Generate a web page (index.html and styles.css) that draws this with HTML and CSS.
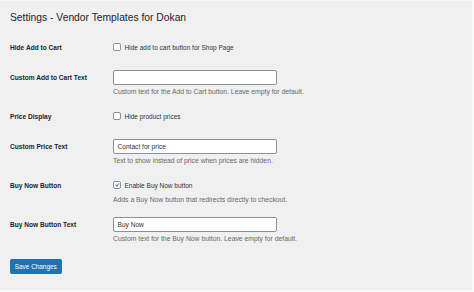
FILE: index.html
```html
<!DOCTYPE html>
<html lang="en">
<head>
<meta charset="utf-8">
<title>Settings - Vendor Templates for Dokan</title>
<link rel="stylesheet" href="styles.css">
</head>
<body>
<div class="page">
  <h1 class="title">Settings - Vendor Templates for Dokan</h1>
  <div class="form">
    <div class="row">
      <div class="label">Hide Add to Cart</div>
      <div class="field">
        <label class="check"><span class="box"></span>Hide add to cart button for Shop Page</label>
      </div>
    </div>
    <div class="row row-desc">
      <div class="label">Custom Add to Cart Text</div>
      <div class="field">
        <div class="input"></div>
        <p class="desc">Custom text for the Add to Cart button. Leave empty for default.</p>
      </div>
    </div>
    <div class="row">
      <div class="label">Price Display</div>
      <div class="field">
        <label class="check"><span class="box"></span>Hide product prices</label>
      </div>
    </div>
    <div class="row row-desc">
      <div class="label">Custom Price Text</div>
      <div class="field">
        <div class="input">Contact for price</div>
        <p class="desc">Text to show instead of price when prices are hidden.</p>
      </div>
    </div>
    <div class="row row-desc">
      <div class="label">Buy Now Button</div>
      <div class="field">
        <label class="check"><span class="box checked"><svg viewBox="0 0 20 20" width="8" height="8"><path d="M14.83 4.89l1.34.94-5.81 8.38H9.02L5.78 9.67l1.34-1.25 2.57 2.4z" fill="#3582c4"/></svg></span>Enable Buy Now button</label>
        <p class="desc">Adds a Buy Now button that redirects directly to checkout.</p>
      </div>
    </div>
    <div class="row row-desc">
      <div class="label">Buy Now Button Text</div>
      <div class="field">
        <div class="input">Buy Now</div>
        <p class="desc">Custom text for the Buy Now button. Leave empty for default.</p>
      </div>
    </div>
  </div>
  <button class="btn" type="button">Save Changes</button>
</div>
</body>
</html>
```
FILE: styles.css
```css
html, body {
  margin: 0;
  padding: 0;
  background: #f9f9fa;
}
body {
  font-family: "Liberation Sans", Arial, Helvetica, sans-serif;
  color: #1d2327;
}
.page {
  box-sizing: border-box;
  width: 472px;
  height: 289px;
  margin-top: 1px;
  background: #f0f0f1;
  padding: 9px 0 0 10px;
}
.title {
  margin: 0 0 6px;
  font-size: 10.3px;
  line-height: 16px;
  font-weight: 400;
  color: #1d2327;
}
.row {
  display: grid;
  grid-template-columns: 103px 1fr;
  padding: 7.5px 0;
}
.row-desc {
  padding-bottom: 5.5px;
}
.label {
  font-size: 6.6px;
  font-weight: 700;
  line-height: 15px;
  color: #1d2327;
}
.check {
  display: flex;
  align-items: center;
  height: 15px;
  font-size: 6.5px;
  color: #2c3338;
}
.box {
  box-sizing: border-box;
  width: 8px;
  height: 8px;
  border: 1px solid #8c8f94;
  border-radius: 2px;
  background: #fff;
  margin-right: 3.5px;
  display: flex;
  align-items: center;
  justify-content: center;
}
.box svg {
  display: block;
  flex: none;
}
.input {
  box-sizing: border-box;
  width: 164px;
  height: 15px;
  border: 1px solid #8c8f94;
  border-radius: 2px;
  background: #fff;
  font-size: 6.6px;
  line-height: 13px;
  padding: 0 3.5px;
  color: #2c3338;
}
.desc {
  margin: 2px 0 0;
  font-size: 6.8px;
  line-height: 9px;
  color: #646970;
  white-space: nowrap;
}
.btn {
  display: block;
  margin-top: 10.5px;
  height: 15px;
  padding: 0 3.8px;
  border: 1px solid #2271b1;
  border-radius: 1.5px;
  background: #2271b1;
  color: #fff;
  font-family: "Liberation Sans", Arial, Helvetica, sans-serif;
  font-size: 6.4px;
  line-height: 13px;
}
```
